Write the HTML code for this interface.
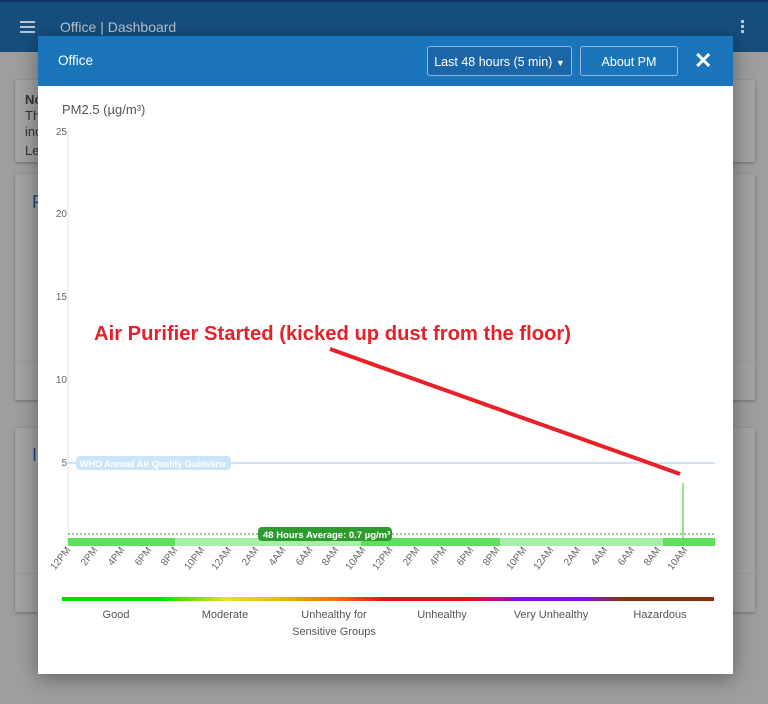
<!DOCTYPE html>
<html><head><meta charset="utf-8"><style>
body{margin:0;width:768px;height:704px;overflow:hidden;background:#9e9e9e;font-family:"Liberation Sans",sans-serif;position:relative}
.top{position:absolute;left:0;top:0;width:768px;height:52px;background:#164f7e;border-top:2px solid #12336a;box-sizing:border-box}
.card{position:absolute;left:15px;width:740px;background:#a3a3a3;box-shadow:0 1px 3px rgba(0,0,0,.3)}
.modal{position:absolute;left:38px;top:36px;width:695px;height:638px;background:#fff;box-shadow:0 4px 20px rgba(0,0,0,.4);overflow:hidden}
.mh{height:50px;background:#1b75bb;position:relative;color:#fff}
.btn{position:absolute;top:10px;height:30px;border:1px solid #8fb8dc;border-radius:3px;font-size:12.5px;line-height:30px;text-align:center;box-sizing:border-box}
</style></head><body>
<div class="top">
 <div style="position:absolute;left:20px;top:19px;width:15px;height:2px;background:#b9c6d3;box-shadow:0 5px 0 #b9c6d3,0 10px 0 #b9c6d3"></div>
 <div style="position:absolute;left:60px;top:17px;color:#b9c6d3;font-size:14px">Office | Dashboard</div>
 <div style="position:absolute;left:741px;top:18px;width:3px;height:3px;background:#b9c6d3;box-shadow:0 5px 0 #b9c6d3,0 10px 0 #b9c6d3"></div>
</div>
<div class="card" style="top:80px;height:82px;font-size:13px;color:#333;line-height:16px;padding:12px 10px;box-sizing:border-box"><b>No</b><br>Th<br>inc<br><span style="line-height:22px">Le</span></div>
<div class="card" style="top:174px;height:226px"><div style="position:absolute;left:17px;top:18px;color:#1a4e7e;font-size:18px">P</div><div style="position:absolute;left:0;right:0;top:187px;border-top:1px solid #999"></div></div>
<div class="card" style="top:428px;height:184px"><div style="position:absolute;left:17px;top:17px;color:#1a4e7e;font-size:18px">I</div><div style="position:absolute;left:0;right:0;top:145px;border-top:1px solid #999"></div></div>
<div class="modal">
 <div class="mh">
  <div style="position:absolute;left:20px;top:17px;font-size:13.5px">Office</div>
  <div class="btn" style="left:389px;width:145px;background:#1a66a6">Last 48 hours (5 min) <span style="font-size:9px">▼</span></div>
  <div class="btn" style="left:542px;width:98px">About PM</div>
  <div style="position:absolute;left:656px;top:12px;font-size:22px;font-weight:bold">✕</div>
 </div>
 <svg width="695" height="588" style="position:absolute;left:0;top:50px" font-family="Liberation Sans, sans-serif">
  <text x="24" y="28" font-size="13" fill="#555">PM2.5 (µg/m³)</text>
  <g font-size="10" fill="#666" text-anchor="end">
   <text x="29" y="49">25</text><text x="29" y="131">20</text><text x="29" y="214">15</text><text x="29" y="297">10</text><text x="29" y="380">5</text>
  </g>
  <line x1="30" y1="44" x2="30" y2="458" stroke="#e4e4e4"/>
  <line x1="30" y1="377" x2="677" y2="377" stroke="#bfdcf2" stroke-width="1.5"/>
  <rect x="38" y="370" width="155" height="14" rx="4" fill="#cce4f7"/>
  <text x="42" y="381" font-size="9" font-weight="bold" fill="#fff">WHO Annual Air Quality Guideline</text>
  <line x1="30" y1="448" x2="677" y2="448" stroke="#2a9a2a" stroke-dasharray="2,2"/>
  <rect x="30" y="452" width="107" height="8" fill="#5ee05e"/>
  <rect x="137" y="452" width="186" height="8" fill="#a8eea8"/>
  <rect x="323" y="452" width="139" height="8" fill="#5ee05e"/>
  <rect x="462" y="452" width="163" height="8" fill="#a8eea8"/>
  <rect x="625" y="452" width="52" height="8" fill="#5ee05e"/>
  <line x1="645" y1="397" x2="645" y2="456" stroke="#4fdf4f" stroke-width="1.3"/>
  <rect x="220" y="441" width="134" height="14" rx="4" fill="#2e9b2e"/>
  <text x="225" y="452" font-size="9.5" font-weight="bold" fill="#fff">48 Hours Average: 0.7 µg/m³</text>
  <g font-size="10" fill="#666" text-anchor="end">
   <text transform="translate(33,464) rotate(-52)">12PM</text><text transform="translate(60,464) rotate(-52)">2PM</text><text transform="translate(87,464) rotate(-52)">4PM</text><text transform="translate(114,464) rotate(-52)">6PM</text><text transform="translate(140,464) rotate(-52)">8PM</text><text transform="translate(167,464) rotate(-52)">10PM</text><text transform="translate(194,464) rotate(-52)">12AM</text><text transform="translate(221,464) rotate(-52)">2AM</text><text transform="translate(248,464) rotate(-52)">4AM</text><text transform="translate(275,464) rotate(-52)">6AM</text><text transform="translate(301,464) rotate(-52)">8AM</text><text transform="translate(328,464) rotate(-52)">10AM</text><text transform="translate(355,464) rotate(-52)">12PM</text><text transform="translate(382,464) rotate(-52)">2PM</text><text transform="translate(409,464) rotate(-52)">4PM</text><text transform="translate(436,464) rotate(-52)">6PM</text><text transform="translate(462,464) rotate(-52)">8PM</text><text transform="translate(489,464) rotate(-52)">10PM</text><text transform="translate(516,464) rotate(-52)">12AM</text><text transform="translate(543,464) rotate(-52)">2AM</text><text transform="translate(570,464) rotate(-52)">4AM</text><text transform="translate(597,464) rotate(-52)">6AM</text><text transform="translate(623,464) rotate(-52)">8AM</text><text transform="translate(650,464) rotate(-52)">10AM</text>
  </g>
  <text x="56" y="254" font-size="20" font-weight="bold" fill="#e8202a" textLength="477" lengthAdjust="spacingAndGlyphs">Air Purifier Started (kicked up dust from the floor)</text>
  <line x1="292" y1="263" x2="642" y2="388" stroke="#e8202a" stroke-width="4"/>
  <defs><linearGradient id="g"><stop offset="0" stop-color="#00e000"/><stop offset=".15" stop-color="#00e000"/><stop offset=".25" stop-color="#e8e020"/><stop offset=".32" stop-color="#e8c020"/><stop offset=".42" stop-color="#e87010"/><stop offset=".5" stop-color="#e81010"/><stop offset=".62" stop-color="#e81010"/><stop offset=".7" stop-color="#8a10e0"/><stop offset=".8" stop-color="#8a10e0"/><stop offset=".86" stop-color="#8a3010"/><stop offset="1" stop-color="#8a3010"/></linearGradient></defs>
  <rect x="24" y="511" width="652" height="4" fill="url(#g)"/>
  <g font-size="11" fill="#555" text-anchor="middle">
   <text x="78" y="532">Good</text><text x="187" y="532">Moderate</text><text x="296" y="532">Unhealthy for</text><text x="296" y="549">Sensitive Groups</text><text x="404" y="532">Unhealthy</text><text x="513" y="532">Very Unhealthy</text><text x="622" y="532">Hazardous</text>
  </g>
 </svg>
</div>
</body></html>
